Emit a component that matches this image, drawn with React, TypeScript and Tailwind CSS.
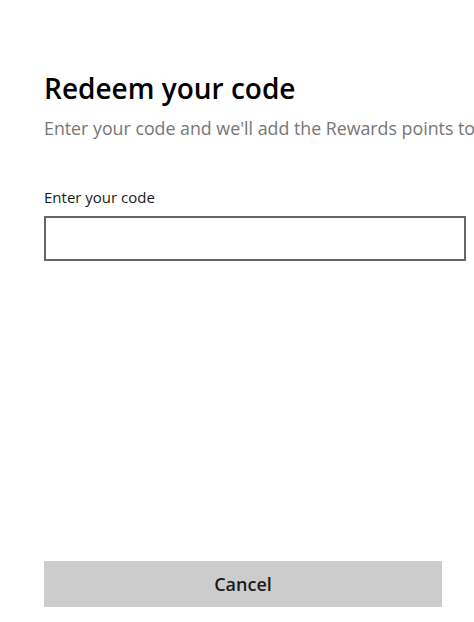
export default function App() {
  return (
    <div
      className="w-[474px] h-[622px] bg-white overflow-hidden flex flex-col pl-[44px]"
      style={{ fontFamily: '"Open Sans", "Noto Sans", sans-serif' }}
    >
      <h1 className="mt-[68px] text-[28px] leading-[40px] font-semibold text-black whitespace-nowrap">
        Redeem your code
      </h1>
      <p className="mt-[8px] text-[17.8px] leading-[24px] text-[#767676] whitespace-nowrap">
        Enter your code and we'll add the Rewards points to your account.
      </p>
      <label className="mt-[47px] text-[15px] leading-[20px] text-[#1a1a1a]">
        Enter your code
      </label>
      <input
        type="text"
        className="mt-[9px] w-[422px] h-[45px] border-2 border-[#666666] bg-white px-2 outline-none"
      />
      <div className="flex-1" />
      <button className="mb-[15px] w-[398px] h-[46px] bg-[#cccccc] text-[18px] font-semibold text-[#1a1a1a]">
        Cancel
      </button>
    </div>
  );
}
